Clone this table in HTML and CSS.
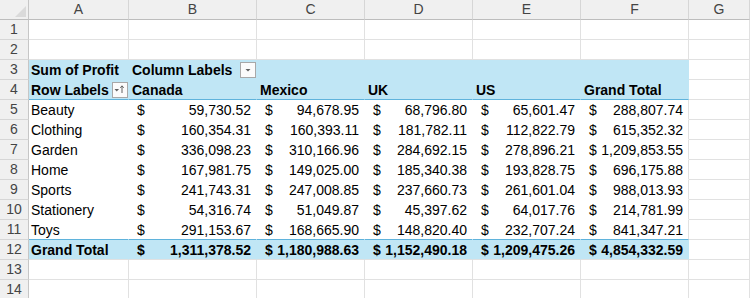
FILE: index.html
```html
<!DOCTYPE html>
<html lang="en">
<head>
    <meta charset="UTF-8">
    <title>Profit Pivot</title>
    <link rel="stylesheet" href="styles.css">
</head>
<body>
    <div class="sheet">
        <!-- cabeçalho de colunas -->
        <div class="corner"><svg width="11" height="11" viewBox="0 0 11 11"><polygon points="11,0 11,11 0,11" fill="#dadada"/></svg></div>
        <div class="colhead">A</div><div class="colhead">B</div><div class="colhead">C</div><div class="colhead">D</div><div class="colhead">E</div><div class="colhead">F</div><div class="colhead">G</div>

        <div class="rowhead">1</div><div></div><div></div><div></div><div></div><div></div><div></div><div></div>
        <div class="rowhead">2</div><div></div><div></div><div></div><div></div><div></div><div></div><div></div>

        <!-- pivot header -->
        <div class="rowhead">3</div>
        <div class="hd first">Sum of Profit</div>
        <div class="hd with-btn">Column Labels
            <span class="filter-btn"><svg width="14" height="14" viewBox="0 0 14 14"><polygon points="4.5,6 9.5,6 7,8.5" fill="#606060"/></svg></span>
        </div>
        <div class="hd"></div><div class="hd"></div><div class="hd"></div><div class="hd"></div><div></div>

        <div class="rowhead">4</div>
        <div class="hd hd-bottom first with-btn">Row Labels
            <span class="filter-btn"><svg width="14" height="14" viewBox="0 0 14 14"><polygon points="1.5,6 6,6 3.75,8.5" fill="#606060"/><path d="M9 3V10M7.3 4.8L9 2.8L10.7 4.8" stroke="#606060" stroke-width="1" fill="none"/></svg></span>
        </div>
        <div class="hd hd-bottom">Canada</div><div class="hd hd-bottom">Mexico</div><div class="hd hd-bottom">UK</div><div class="hd hd-bottom">US</div><div class="hd hd-bottom">Grand Total</div><div></div>

        <!-- dados -->
        <div class="rowhead">5</div>
        <div class="pv first">Beauty</div>
        <div class="pv num"><span>$</span><span>59,730.52</span></div>
        <div class="pv num"><span>$</span><span>94,678.95</span></div>
        <div class="pv num"><span>$</span><span>68,796.80</span></div>
        <div class="pv num"><span>$</span><span>65,601.47</span></div>
        <div class="pv num fcol"><span>$</span><span>288,807.74</span></div>
        <div></div>

        <div class="rowhead">6</div>
        <div class="pv first">Clothing</div>
        <div class="pv num"><span>$</span><span>160,354.31</span></div>
        <div class="pv num"><span>$</span><span>160,393.11</span></div>
        <div class="pv num"><span>$</span><span>181,782.11</span></div>
        <div class="pv num"><span>$</span><span>112,822.79</span></div>
        <div class="pv num fcol"><span>$</span><span>615,352.32</span></div>
        <div></div>

        <div class="rowhead">7</div>
        <div class="pv first">Garden</div>
        <div class="pv num"><span>$</span><span>336,098.23</span></div>
        <div class="pv num"><span>$</span><span>310,166.96</span></div>
        <div class="pv num"><span>$</span><span>284,692.15</span></div>
        <div class="pv num"><span>$</span><span>278,896.21</span></div>
        <div class="pv num fcol"><span>$</span><span>1,209,853.55</span></div>
        <div></div>

        <div class="rowhead">8</div>
        <div class="pv first">Home</div>
        <div class="pv num"><span>$</span><span>167,981.75</span></div>
        <div class="pv num"><span>$</span><span>149,025.00</span></div>
        <div class="pv num"><span>$</span><span>185,340.38</span></div>
        <div class="pv num"><span>$</span><span>193,828.75</span></div>
        <div class="pv num fcol"><span>$</span><span>696,175.88</span></div>
        <div></div>

        <div class="rowhead">9</div>
        <div class="pv first">Sports</div>
        <div class="pv num"><span>$</span><span>241,743.31</span></div>
        <div class="pv num"><span>$</span><span>247,008.85</span></div>
        <div class="pv num"><span>$</span><span>237,660.73</span></div>
        <div class="pv num"><span>$</span><span>261,601.04</span></div>
        <div class="pv num fcol"><span>$</span><span>988,013.93</span></div>
        <div></div>

        <div class="rowhead">10</div>
        <div class="pv first">Stationery</div>
        <div class="pv num"><span>$</span><span>54,316.74</span></div>
        <div class="pv num"><span>$</span><span>51,049.87</span></div>
        <div class="pv num"><span>$</span><span>45,397.62</span></div>
        <div class="pv num"><span>$</span><span>64,017.76</span></div>
        <div class="pv num fcol"><span>$</span><span>214,781.99</span></div>
        <div></div>

        <div class="rowhead">11</div>
        <div class="pv last first">Toys</div>
        <div class="pv last num"><span>$</span><span>291,153.67</span></div>
        <div class="pv last num"><span>$</span><span>168,665.90</span></div>
        <div class="pv last num"><span>$</span><span>148,820.40</span></div>
        <div class="pv last num"><span>$</span><span>232,707.24</span></div>
        <div class="pv last num fcol"><span>$</span><span>841,347.21</span></div>
        <div></div>

        <!-- total geral -->
        <div class="rowhead">12</div>
        <div class="tot first">Grand Total</div>
        <div class="tot num"><span>$</span><span>1,311,378.52</span></div>
        <div class="tot num"><span>$</span><span>1,180,988.63</span></div>
        <div class="tot num"><span>$</span><span>1,152,490.18</span></div>
        <div class="tot num"><span>$</span><span>1,209,475.26</span></div>
        <div class="tot num"><span>$</span><span>4,854,332.59</span></div>
        <div></div>

        <div class="rowhead">13</div><div></div><div></div><div></div><div></div><div></div><div></div><div></div>
        <div class="rowhead">14</div><div></div><div></div><div></div><div></div><div></div><div></div><div></div>
    </div>
</body>
</html>
```

FILE: styles.css
```css
body {
    margin: 0;
    font-family: "Liberation Sans", Arial, sans-serif;
    font-size: 14px;
    color: #000;
    background: #fff;
    overflow: hidden;
}

.sheet {
    display: grid;
    grid-template-columns: 29px 100px 128px 108px 108px 108px 108px 1fr;
    grid-auto-rows: 20px;
}

.sheet > div {
    box-sizing: border-box;
    border-right: 1px solid #e1e1e1;
    border-bottom: 1px solid #e1e1e1;
    line-height: 16px;
    padding: 2px 3px 0 3px;
    white-space: nowrap;
    overflow: hidden;
}

.sheet > .corner {
    background: #f0f0f0;
    border-right-color: #c6c6c6;
    border-bottom-color: #bdbdbd;
    display: flex;
    justify-content: flex-end;
    align-items: flex-end;
    padding: 0 2px 2px 0;
}

.sheet > .colhead {
    background: #f0f0f0;
    color: #444;
    text-align: center;
    border-right-color: #d6d6d6;
    border-bottom-color: #bdbdbd;
    padding-top: 1px;
}

.sheet > .rowhead {
    background: #f0f0f0;
    color: #444;
    text-align: center;
    border-right-color: #c6c6c6;
    border-bottom-color: #d6d6d6;
    padding: 1px 0 0 0;
}

.sheet > .first {
    padding-left: 2px;
}

.sheet > .hd {
    background: #c0e6f5;
    border-color: transparent;
    font-weight: bold;
}

.sheet > .hd-bottom {
    border-bottom-color: #5fb3dc;
}

.sheet > .with-btn {
    display: flex;
    justify-content: space-between;
    align-items: flex-start;
    padding-right: 0;
}

.filter-btn {
    display: block;
    width: 14px;
    height: 14px;
    border: 1px solid #a8a8a8;
    background: #fbfbfb;
    margin-top: 0;
}

.filter-btn svg {
    display: block;
}

.sheet > .pv {
    border-color: transparent;
}

.sheet > .pv.last {
    border-bottom-color: #5fb3dc;
}

.sheet > .pv.fcol {
    border-right-color: #e1e1e1;
}

.sheet > .tot {
    background: #c0e6f5;
    border-right-color: transparent;
    font-weight: bold;
}

.sheet > .num {
    display: flex;
    justify-content: space-between;
    padding: 2px 5px 0 8px;
}
```
